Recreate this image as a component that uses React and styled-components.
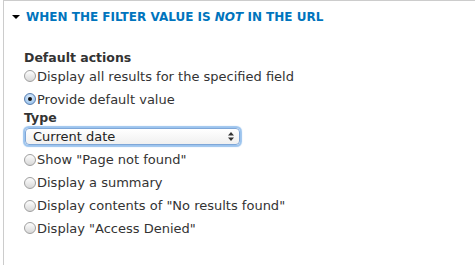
import React from "react";
import styled, { createGlobalStyle } from "styled-components";

const Global = createGlobalStyle`
  html, body { margin: 0; padding: 0; background: #fff; }
  body { font-family: "DejaVu Sans", "Liberation Sans", sans-serif; color: #333; }
`;

const Fieldset = styled.section`
  margin-left: 3px;
  height: 265px;
  box-sizing: border-box;
  border-top: 1px solid #ccc;
  border-left: 1px solid #ccc;
  padding: 9px 0 0 7px;
`;

const Legend = styled.div`
  display: flex;
  align-items: center;
  gap: 6px;
  color: #0074bd;
  font-weight: bold;
  font-size: 12px;
  text-transform: uppercase;
  height: 14px;
`;

const Caret = styled.span`
  width: 0;
  height: 0;
  border-left: 4px solid transparent;
  border-right: 4px solid transparent;
  border-top: 4px solid #000;
  margin-left: 1px;
`;

const Body = styled.div`
  padding: 27px 0 0 13px;
  display: flex;
  flex-direction: column;
`;

const Label = styled.div`
  font-weight: bold;
  font-size: 12.5px;
  color: #333;
  height: 14px;
  line-height: 14px;
`;

const Option = styled.label`
  display: flex;
  align-items: center;
  gap: 1px;
  height: 22.8px;
  font-size: 13px;
  color: #333;
`;

const Radio = styled.span`
  flex: none;
  width: 12px;
  height: 12px;
  border-radius: 50%;
  box-sizing: border-box;
  border: 1px solid ${(p) => (p.$checked ? "#5a7fb0" : "#a0a0a0")};
  background: ${(p) =>
    p.$checked
      ? "radial-gradient(circle at 50% 35%, #e2f0ff, #86b6e6)"
      : "linear-gradient(#fdfdfd, #d8d8d8)"};
  display: flex;
  align-items: center;
  justify-content: center;
  &::after {
    content: "";
    display: ${(p) => (p.$checked ? "block" : "none")};
    width: 4px;
    height: 4px;
    border-radius: 50%;
    background: #111;
  }
`;

const Select = styled.div`
  margin: 3px 0 4px 1px;
  width: 215px;
  height: 17px;
  box-sizing: border-box;
  border: 1px solid #7fa7d8;
  border-radius: 4px;
  box-shadow: 0 0 1px 1.5px #9cc4ee;
  background: linear-gradient(#ffffff, #f0f0f0);
  display: flex;
  align-items: center;
  justify-content: space-between;
  padding: 0 5px 0 7px;
  font-size: 13px;
  color: #222;
`;

const Arrows = styled.svg`
  width: 6px;
  height: 9px;
`;

const Item = ({ checked, children }) => (
  <Option>
    <Radio $checked={checked} />
    {children}
  </Option>
);

export default function App() {
  return (
    <>
      <Global />
      <Fieldset>
        <Legend>
          <Caret />
          <span>
            When the filter value is <i>not</i> in the URL
          </span>
        </Legend>
        <Body>
          <Label>Default actions</Label>
          <Item>Display all results for the specified field</Item>
          <Item checked>Provide default value</Item>
          <Label>Type</Label>
          <Select>
            <span>Current date</span>
            <Arrows viewBox="0 0 6 9">
              <path d="M3 0 L6 3.5 H0 Z M0 5.5 H6 L3 9 Z" fill="#333" />
            </Arrows>
          </Select>
          <Item>Show "Page not found"</Item>
          <Item>Display a summary</Item>
          <Item>Display contents of "No results found"</Item>
          <Item>Display "Access Denied"</Item>
        </Body>
      </Fieldset>
    </>
  );
}
